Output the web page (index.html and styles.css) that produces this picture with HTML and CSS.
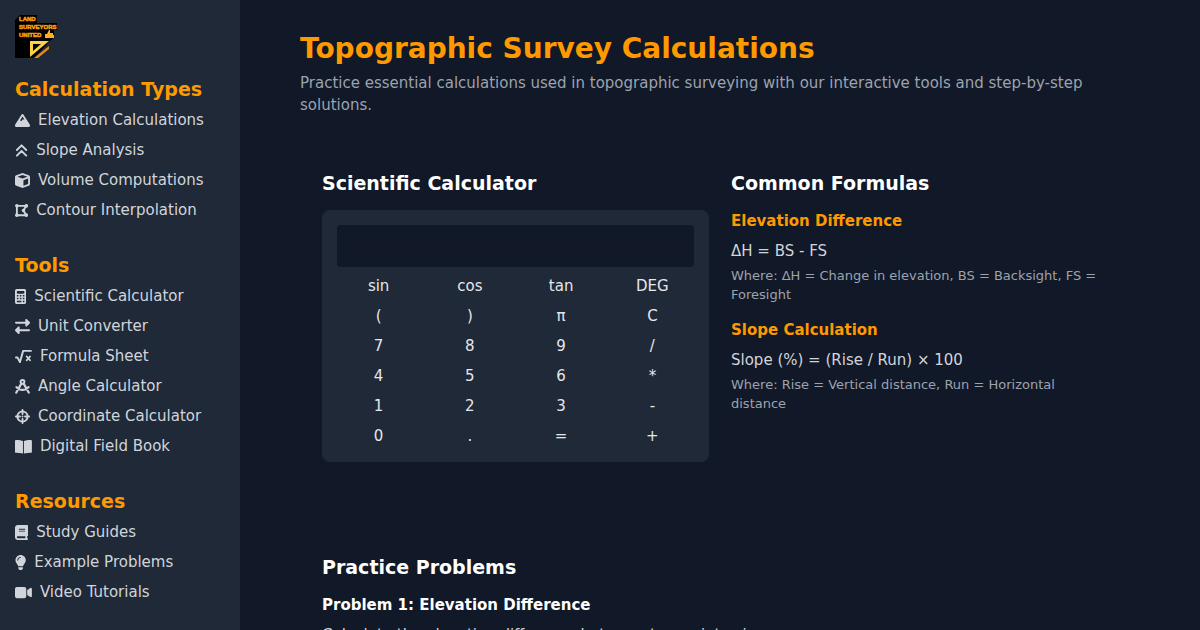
FILE: index.html
```html
<!DOCTYPE html>
<html lang="en">

<head>
  <meta charset="UTF-8">
  <meta name="viewport" content="width=device-width, initial-scale=1.0">
  <title>Topographic Survey Calculations</title>

  <link rel="stylesheet" href="styles.css">
</head>

<body>

  <div class="layout">

    <!-- Sidebar -->
    <aside class="sidebar">
      <a class="logo" href="#" aria-label="Land Surveyors United">
        <svg viewBox="0 0 43 43" aria-hidden="true">
          <path d="M0 5L5 0H22V8H42V15H39V23L35 26L19 43H0z" fill="#000" />
          <g class="logo-text" stroke="#f59e0b" stroke-width="0.5">
            <text x="4" y="6">LAND</text>
            <text x="4" y="14">SURVEYORS</text>
            <text x="4" y="22">UNITED</text>
          </g>
          <path d="M30 19h2l2-4h1v3h3v2h1v3h-9z" fill="#fdb022" />
          <path fill-rule="evenodd" d="M15 26H34L15 42zM18 29v7l8-7z" fill="#f7d34a" />
          <path d="M19 43L34 31v3L23 43z" fill="#e58a1f" />
        </svg>
      </a>

      <nav class="menu">
        <section class="menu-group">
          <h2>Calculation Types</h2>
          <ul>
            <li><a href="#elevation">
              <svg class="icon" viewBox="0 0 512 512"><path fill-rule="evenodd" d="M256 32c12.500 0 24.100 6.400 30.700 17L503.400 394.400c5.600 8.900 8.600 19.200 8.600 29.700c0 30.900-25 55.900-55.900 55.900H55.900C25 480 0 455 0 424.100c0-10.500 3-20.800 8.600-29.700L225.200 49c6.600-10.600 18.300-17 30.800-17zm65 192L256 120.400 176.900 246.500l18.300 24.400c6.400 8.500 19.200 8.500 25.600 0l25.600-34.100c6-8.100 15.500-12.800 25.600-12.800h49z" /></svg>
              Elevation Calculations</a></li>
            <li><a href="#slope">
              <svg class="icon" viewBox="0 0 448 512"><path class="line" d="M64 240L224 80L384 240M64 432L224 272L384 432" /></svg>
              Slope Analysis</a></li>
            <li><a href="#volume">
              <svg class="icon" viewBox="0 0 512 512"><path fill-rule="evenodd" d="M234.500 5.700c13.900-5 29.100-5 43.100 0l192 68.600C495 83.400 512 107.500 512 134.600v242.900c0 27-17 51.200-42.500 60.300l-192 68.600c-13.900 5-29.100 5-43.100 0l-192-68.600C17 428.600 0 404.500 0 377.400V134.600c0-27 17-51.200 42.500-60.300l192-68.600zM256 66L82.300 128L256 190l173.700-62L256 66zm32 368.600l160-57.100v-188L288 246.600v188z" /></svg>
              Volume Computations</a></li>
            <li><a href="#contour">
              <svg class="icon" viewBox="0 0 448 512"><path class="line" d="M64 96H384M64 416H384M64 96V416M384 96L288 256L384 416" /><circle cx="64" cy="96" r="62" /><circle cx="384" cy="96" r="62" /><circle cx="288" cy="256" r="58" /><circle cx="64" cy="416" r="62" /><circle cx="384" cy="416" r="62" /></svg>
              Contour Interpolation</a></li>
          </ul>
        </section>

        <section class="menu-group">
          <h2>Tools</h2>
          <ul>
            <li><a href="#calculator">
              <svg class="icon" viewBox="0 0 384 512"><path fill-rule="evenodd" d="M64 0C28.700 0 0 28.700 0 64v384c0 35.300 28.700 64 64 64h256c35.300 0 64-28.700 64-64V64c0-35.300-28.700-64-64-64H64zm32 64h192c17.700 0 32 14.300 32 32v32c0 17.700-14.300 32-32 32H96c-17.700 0-32-14.300-32-32V96c0-17.700 14.300-32 32-32zM64 204h52v52H64zM166 204h52v52h-52zM268 204h52v52h-52zM64 302h52v52H64zM166 302h52v52h-52zM268 302h52v52h-52zM64 400h154v48H64zM268 400h52v48h-52z" /></svg>
              Scientific Calculator</a></li>
            <li><a href="#converter">
              <svg class="icon" viewBox="0 0 512 512"><path d="M32 96h320V32c0-13 8-24 20-29s25-2 35 7l96 96c12 12 12 32 0 44l-96 96c-10 9-23 12-35 7s-20-16-20-29v-64H32c-18 0-32-14-32-32s14-32 32-32zM480 352c18 0 32 14 32 32s-14 32-32 32H160v64c0 13-8 24-20 29s-25 2-35-7l-96-96c-12-12-12-32 0-44l96-96c10-9 23-12 35-7s20 16 20 29v64z" /></svg>
              Unit Converter</a></li>
            <li><a href="#formulas">
              <svg class="icon" viewBox="0 0 576 512"><path class="line" d="M32 288H84L168 448L278 64H544M400 256L512 384M512 256L400 384" /></svg>
              Formula Sheet</a></li>
            <li><a href="#angle">
              <svg class="icon" viewBox="0 0 512 512"><path class="line thick" d="M212 165L44 462M300 165L468 462M50 276C150 400 362 400 462 276" /><path fill-rule="evenodd" d="M256 0a98 98 0 1 0 0 196a98 98 0 1 0 0-196zm0 66a32 32 0 1 1 0 64a32 32 0 1 1 0-64z" /></svg>
              Angle Calculator</a></li>
            <li><a href="#coordinate">
              <svg class="icon" viewBox="0 0 512 512"><circle class="line" cx="256" cy="256" r="176" /><path class="line" d="M256 32V170M256 342V480M32 256H170M342 256H480" /><circle cx="256" cy="256" r="32" /></svg>
              Coordinate Calculator</a></li>
            <li><a href="#fieldbook">
              <svg class="icon" viewBox="0 0 576 512"><path d="M272 71C240 45 130 33 38 32C16 31 0 40 0 58V440c0 19 16 30 35 31c80 2 158 6 237 27zM304 71C336 45 446 33 538 32C560 31 576 40 576 58V440c0 19-16 30-35 31c-80 2-158 6-237 27z" /></svg>
              Digital Field Book</a></li>
          </ul>
        </section>

        <section class="menu-group">
          <h2>Resources</h2>
          <ul>
            <li><a href="#guides">
              <svg class="icon" viewBox="0 0 448 512"><path fill-rule="evenodd" d="M96 0C43 0 0 43 0 96v320c0 53 43 96 96 96h320c17.700 0 32-14.300 32-32s-14.300-32-32-32v-64c17.700 0 32-14.300 32-32V32c0-17.700-14.300-32-32-32H96zm0 384h256v64H96c-17.700 0-32-14.300-32-32s14.300-32 32-32zm48-256h192c8.800 0 16 7.200 16 16s-7.200 16-16 16H144c-8.800 0-16-7.200-16-16s7.200-16 16-16zm0 64h192c8.800 0 16 7.200 16 16s-7.200 16-16 16H144c-8.800 0-16-7.200-16-16s7.200-16 16-16z" /></svg>
              Study Guides</a></li>
            <li><a href="#examples">
              <svg class="icon" viewBox="0 0 384 512"><path fill-rule="evenodd" d="M272 384c9.600-31.900 29.500-59.100 49.200-86.200c5.200-7.100 10.400-14.200 15.400-21.400C356.400 247.900 368 213.300 368 176C368 78.800 289.200 0 192 0S16 78.800 16 176c0 37.300 11.600 71.900 31.400 100.400c5 7.200 10.200 14.300 15.400 21.400c19.800 27.100 39.700 54.400 49.200 86.200h160zM192 512c44.200 0 80-35.800 80-80v-16H112v16c0 44.200 35.800 80 80 80zM112 176c0 8.800-7.200 16-16 16s-16-7.200-16-16c0-61.900 50.100-112 112-112c8.800 0 16 7.200 16 16s-7.200 16-16 16c-44.200 0-80 35.800-80 80z" /></svg>
              Example Problems</a></li>
            <li><a href="#videos">
              <svg class="icon" viewBox="0 0 576 512"><path d="M0 128C0 92.700 28.700 64 64 64h256c35.300 0 64 28.700 64 64v256c0 35.300-28.700 64-64 64H64c-35.300 0-64-28.700-64-64V128zM559 100c10 5 17 16 17 28v256c0 12-7 23-17 28s-23 5-33-2l-96-64-14-9V175l14-9 96-64c10-7 23-7 33-2z" /></svg>
              Video Tutorials</a></li>
          </ul>
        </section>
      </nav>
    </aside>

    <!-- Main content -->
    <main class="content">
      <header class="page-header">
        <h1>Topographic Survey Calculations</h1>
        <p>Practice essential calculations used in topographic surveying with our interactive tools and step-by-step solutions.</p>
      </header>

      <section class="panel columns">
        <div id="calculator">
          <h2>Scientific Calculator</h2>
          <div class="calculator">
            <input class="display" type="text" aria-label="Calculator display" readonly>
            <div class="keys">
              <button type="button">sin</button>
              <button type="button">cos</button>
              <button type="button">tan</button>
              <button type="button">DEG</button>
              <button type="button">(</button>
              <button type="button">)</button>
              <button type="button">π</button>
              <button type="button">C</button>
              <button type="button">7</button>
              <button type="button">8</button>
              <button type="button">9</button>
              <button type="button">/</button>
              <button type="button">4</button>
              <button type="button">5</button>
              <button type="button">6</button>
              <button type="button">*</button>
              <button type="button">1</button>
              <button type="button">2</button>
              <button type="button">3</button>
              <button type="button">-</button>
              <button type="button">0</button>
              <button type="button">.</button>
              <button type="button">=</button>
              <button type="button">+</button>
            </div>
          </div>
        </div>

        <div id="formulas">
          <h2>Common Formulas</h2>
          <div class="formulas">
            <div class="formula">
              <h3>Elevation Difference</h3>
              <p>ΔH = BS - FS</p>
              <p class="note">Where: ΔH = Change in elevation, BS = Backsight, FS = Foresight</p>
            </div>
            <div class="formula">
              <h3>Slope Calculation</h3>
              <p>Slope (%) = (Rise / Run) × 100</p>
              <p class="note">Where: Rise = Vertical distance, Run = Horizontal distance</p>
            </div>
          </div>
        </div>
      </section>

      <section class="panel">
        <h2>Practice Problems</h2>
        <div class="problem">
          <h3>Problem 1: Elevation Difference</h3>
          <p>Calculate the elevation difference between two points given:</p>
        </div>
      </section>
    </main>

  </div>

</body>

</html>
```
FILE: styles.css
```css
* {
  box-sizing: border-box;
  margin: 0;
  padding: 0;
}

body {
  background: #111827;
  color: #fff;
  font-family: Verdana, "DejaVu Sans", sans-serif;
  font-size: 15px;
  line-height: 22px;
}

ul {
  list-style: none;
}

h2 {
  font-size: 19px;
  line-height: 26px;
}

h3 {
  font-size: 15px;
  line-height: 22px;
}

.layout {
  display: flex;
  min-height: 100vh;
}

/* Sidebar */
.sidebar {
  flex: 0 0 240px;
  padding: 15px;
  background: #1f2937;
}

.logo {
  display: block;
  width: 43px;
  margin-bottom: 18px;
}

.logo svg {
  display: block;
  overflow: visible;
}

.logo-text {
  fill: #f59e0b;
  font-family: "Liberation Sans", Arial, sans-serif;
  font-size: 6px;
  font-weight: bold;
}

.menu {
  display: grid;
  gap: 31px;
}

.menu h2 {
  margin-bottom: 7px;
  color: #ff9900;
}

.menu ul {
  display: grid;
  gap: 8px;
}

.menu a {
  display: flex;
  align-items: center;
  gap: 8px;
  color: #d1d5db;
  text-decoration: none;
}

.menu a:hover {
  color: #ff9900;
}

.icon {
  height: 15px;
  fill: currentcolor;
}

.icon .line {
  fill: none;
  stroke: currentcolor;
  stroke-width: 64;
  stroke-linecap: round;
  stroke-linejoin: round;
}

.icon .thick {
  stroke-width: 76;
}

/* Main content */
.content {
  flex: 1;
  max-width: 840px;
  margin: 0 auto;
  padding: 32px 0;
}

.page-header {
  margin-bottom: 32px;
}

.page-header h1 {
  margin-bottom: 6px;
  color: #ff9900;
  font-size: 28px;
  line-height: 34px;
}

.page-header p {
  color: #9ca3af;
}

.panel {
  margin-bottom: 48px;
  padding: 22px;
}

.panel h2 {
  margin-bottom: 14px;
}

.columns {
  display: grid;
  grid-template-columns: 1fr 1fr;
  gap: 22px;
}

/* Calculator */
.calculator {
  padding: 15px;
  border-radius: 8px;
  background: #1f2937;
}

.display {
  display: block;
  width: 100%;
  height: 42px;
  margin-bottom: 8px;
  padding: 8px;
  border: 0;
  border-radius: 4px;
  background: #111827;
  color: #fff;
  font: inherit;
  text-align: right;
}

.keys {
  display: grid;
  grid-template-columns: repeat(4, 1fr);
  gap: 8px;
}

.keys button {
  border: 0;
  background: transparent;
  color: #e5e7eb;
  font: inherit;
  cursor: pointer;
}

/* Formulas */
.formulas {
  display: grid;
  gap: 15px;
  padding-right: 15px;
}

.formula h3 {
  margin-bottom: 8px;
  color: #ff9900;
}

.formula p {
  color: #d1d5db;
}

.formula .note {
  margin-top: 4px;
  color: #9ca3af;
  font-size: 13px;
  line-height: 19px;
}

/* Practice problems */
.problem h3 {
  margin-bottom: 8px;
}

.problem p {
  color: #d1d5db;
}
```
